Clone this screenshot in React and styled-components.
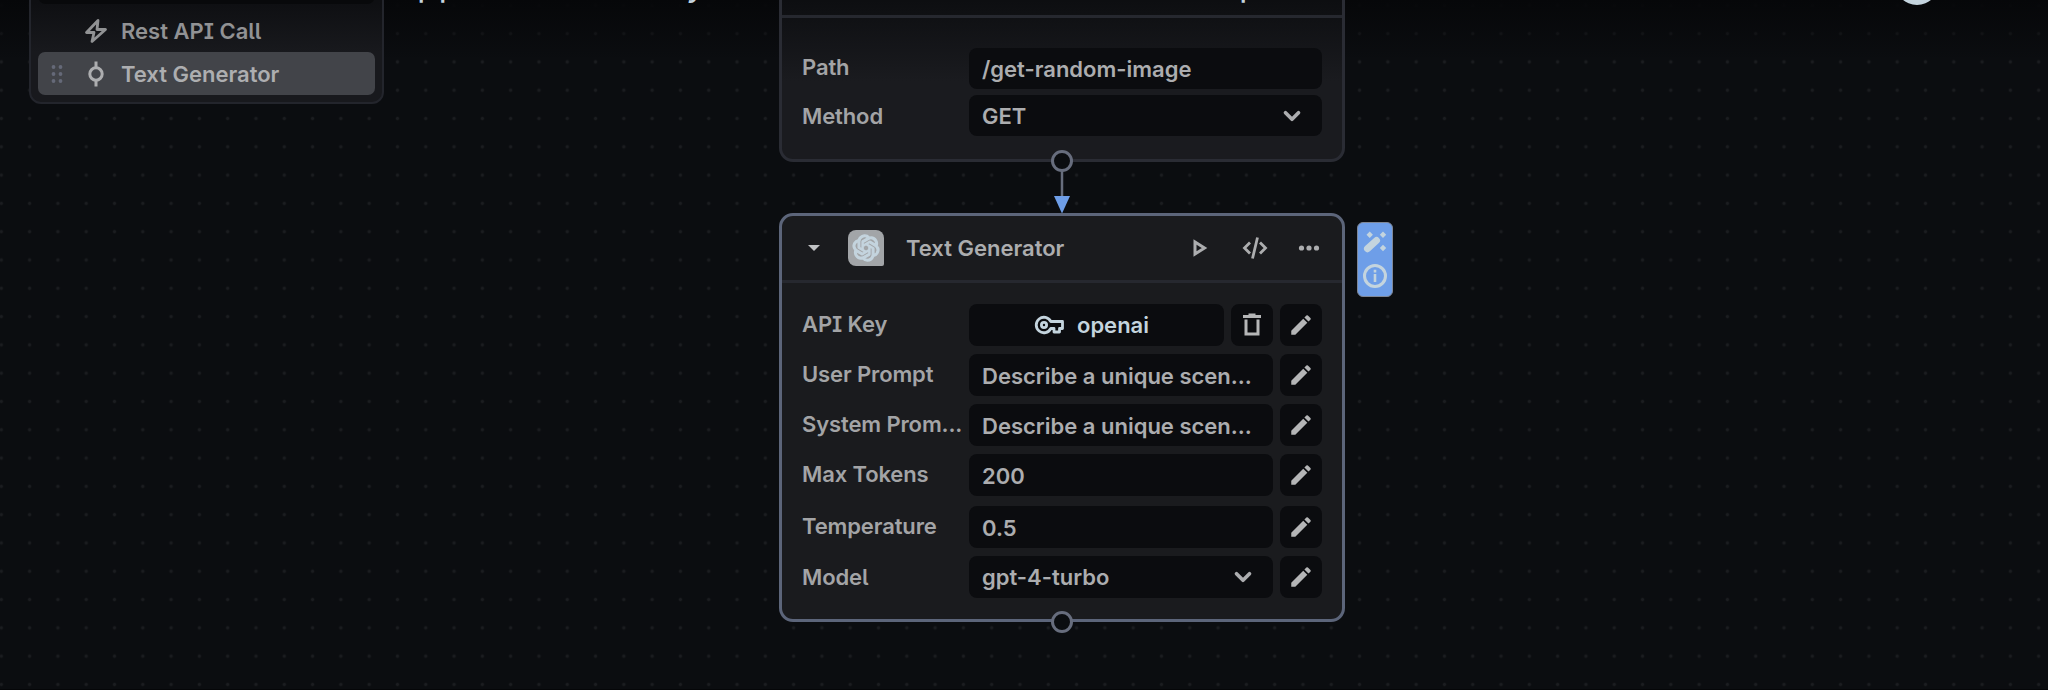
import React from 'react';
import styled, { createGlobalStyle } from 'styled-components';
import { ChevronDown } from 'lucide-react';
import { MdEdit } from 'react-icons/md';
import { SiOpenai } from 'react-icons/si';

const Color = {
  canvas: '#0b0d10',
  panel: '#1a1b1e',
  field: '#0b0c0f',
  line: '#26282f',
  node: '#2a2c34',
  selected: '#5c657a',
  label: '#a3a4a6',
  value: '#acadaf',
  bright: '#c4d4de',
  blue: '#6e9ee8',
};

const GlobalStyle = createGlobalStyle`
  * {
    box-sizing: border-box;
  }
  body {
    margin: 0;
    background: ${Color.canvas};
    font-family: Inter, 'Liberation Sans', sans-serif;
    font-feature-settings: 'cv05', 'cv08';
  }
  svg {
    display: block;
    flex: none;
  }
`;

const Canvas = styled.div`
  position: relative;
  width: 2048px;
  height: 690px;
  overflow: hidden;
  background:
    linear-gradient(#060709, rgba(6, 7, 9, 0) 60px),
    radial-gradient(circle, #1b1d20 0, #1b1d20 1px, transparent 2.3px) -12.85px -8.85px / 28.305px 28.305px,
    ${Color.canvas};
  border-bottom: 1px solid #050608;
`;

const Headline = styled.div`
  position: absolute;
  z-index: 3;
  left: 0;
  top: 0;
  width: 2048px;
  height: 24px;
  overflow: hidden;
  color: ${Color.bright};
  font-size: 35px;
  line-height: 42px;
`;

const Piece = styled.span`
  position: absolute;
  left: ${({ $left }) => $left}px;
  top: -38px;
`;

const Avatar = styled.div`
  position: absolute;
  left: 1895px;
  top: -39px;
  width: 44px;
  height: 44px;
  border-radius: 50%;
  background: ${Color.bright};
`;

const Sidebar = styled.div`
  position: absolute;
  left: 29px;
  top: -60px;
  width: 355px;
  height: 164px;
  padding: 0 7px 7px;
  display: flex;
  flex-direction: column;
  justify-content: flex-end;
  background: linear-gradient(#0e0f12 60px, #18191d 110px);
  border: 2px solid #23252c;
  border-radius: 12px;
`;

const SearchBox = styled.div`
  height: 50px;
  margin-bottom: 5px;
  background: #08090b;
  border-radius: 8px;
`;

const SidebarItem = styled.div`
  display: flex;
  align-items: center;
  height: 43px;
  border-radius: 7px;
  padding-left: 12px;
  color: ${({ $active }) => ($active ? '#adaeb0' : '#919294')};
  background: ${({ $active }) => ($active ? '#424449' : 'transparent')};
  font-size: 22px;
  font-weight: 600;
`;

const Grip = styled.div`
  width: 14px;
  display: flex;
`;

const ItemIcon = styled.div`
  width: 24px;
  display: flex;
  justify-content: center;
  margin: 0 13px 0 20px;
`;

const Node = styled.div`
  position: absolute;
  left: 779px;
  top: ${({ $top }) => $top}px;
  width: 566px;
  height: ${({ $height }) => $height}px;
  background: ${({ $selected }) => ($selected ? Color.panel : 'linear-gradient(#0d0e11 50px, #1a1b1f 130px)')};
  border: 3px solid ${({ $selected }) => ($selected ? Color.selected : Color.node)};
  border-radius: 14px;
`;

const NodeHeader = styled.div`
  display: flex;
  align-items: center;
  height: 67px;
  padding: 0 22px 0 25px;
  border-bottom: 3px solid ${Color.line};
  color: ${Color.value};
`;

const NodeLogo = styled.div`
  display: flex;
  align-items: center;
  justify-content: center;
  width: 36px;
  height: 36px;
  margin: 0 22px 0 27px;
  border-radius: 8px 8px 2px 8px;
  background: #a2a5a8;
  color: ${Color.bright};
`;

const OpenaiMark = styled(SiOpenai)`
  overflow: visible;
  stroke: currentColor;
  stroke-width: 1.2px;
`;

const NodeTitle = styled.div`
  flex: 1;
  font-size: 22px;
  font-weight: 600;
`;

const Actions = styled.div`
  display: flex;
  align-items: center;
  gap: 30px;

  > :first-child {
    margin-right: 4px;
  }
`;

const Rows = styled.div`
  display: flex;
  flex-direction: column;
  padding: ${({ $top }) => $top}px 20px 0 20px;
`;

const Row = styled.div`
  display: flex;
  align-items: flex-start;
  height: ${({ $height }) => $height || 50}px;
`;

const Label = styled.div`
  width: 167px;
  padding-top: ${({ $drop }) => $drop || 6}px;
  color: ${Color.label};
  font-size: 22px;
  line-height: 28px;
  font-weight: 600;
  letter-spacing: -0.12px;
  white-space: nowrap;
`;

const Field = styled.div`
  flex: 1;
  display: flex;
  align-items: center;
  justify-content: ${({ $centered }) => ($centered ? 'center' : 'space-between')};
  gap: 13px;
  height: ${({ $height }) => $height || 42}px;
  padding: ${({ $drop }) => $drop || 0}px ${({ $centered }) => ($centered ? 23 : 17)}px 0 13px;
  border-radius: 8px;
  background: ${Color.field};
  color: ${({ $centered }) => ($centered ? Color.bright : Color.value)};
  font-size: 22px;
  font-weight: 600;
  white-space: nowrap;
`;

const SquareButton = styled.div`
  display: flex;
  align-items: center;
  justify-content: center;
  width: 42px;
  height: 42px;
  margin-left: 7px;
  border-radius: 8px;
  background: ${Color.field};
  color: #b5b6b7;
`;

const Port = styled.div`
  position: absolute;
  z-index: 2;
  left: 1051px;
  top: ${({ $top }) => $top}px;
  width: 22px;
  height: 22px;
  border: 3px solid #676d7d;
  border-radius: 50%;
  background: ${Color.canvas};
`;

const Edge = styled.svg`
  position: absolute;
  left: 1052px;
  top: 170px;
`;

const Toolbar = styled.div`
  position: absolute;
  left: 1357px;
  top: 222px;
  width: 36px;
  height: 75px;
  display: flex;
  flex-direction: column;
  align-items: center;
  justify-content: space-between;
  padding: 7px 0;
  border: 1px solid #7f8796;
  border-radius: 6px;
  background: ${Color.blue};
  color: ${Color.bright};
`;

const BoltIcon = () => (
  <svg width="24" height="26" viewBox="0 0 24 26" fill="none" stroke="currentColor" strokeWidth="2.8" strokeLinejoin="round">
    <path d="M14 2.5 2.5 14.5h7.5L8 23.5l13.5-12h-8.5z" />
  </svg>
);

const CommitIcon = () => (
  <svg width="18" height="26" viewBox="0 0 18 26" fill="none" stroke="currentColor" strokeWidth="3">
    <circle cx="9" cy="13" r="6.2" />
    <path d="M9 0.5v6M9 19.5v6" />
  </svg>
);

const GripIcon = () => (
  <svg width="14" height="20" viewBox="0 0 14 20" fill="#656978">
    {[3, 10, 17].map((y) => (
      <React.Fragment key={y}>
        <circle cx="3.5" cy={y} r="1.9" />
        <circle cx="10.5" cy={y} r="1.9" />
      </React.Fragment>
    ))}
  </svg>
);

const CaretIcon = () => (
  <svg width="14" height="8" viewBox="0 0 14 8" fill="#c0c2c4">
    <path d="M1 1h12L7 7z" />
  </svg>
);

const PlayIcon = () => (
  <svg width="16" height="18" viewBox="0 0 16 18" fill="none" stroke="currentColor" strokeWidth="3">
    <path d="M3 3v12l9.5-6z" />
  </svg>
);

const CodeIcon = () => (
  <svg width="26" height="24" viewBox="0 0 26 24" fill="none" stroke="currentColor" strokeWidth="2.8">
    <path d="M8 6.5 2.5 12 8 17.5M18 6.5l5.5 5.5-5.5 5.5M15.5 1.5l-5 21" />
  </svg>
);

const DotsIcon = () => (
  <svg width="22" height="8" viewBox="0 0 22 8" fill="currentColor">
    <circle cx="3.5" cy="4" r="2.6" />
    <circle cx="11" cy="4" r="2.6" />
    <circle cx="18.5" cy="4" r="2.6" />
  </svg>
);

const KeyIcon = () => (
  <svg width="30" height="20" viewBox="0 0 30 20" fill="none" stroke="currentColor" strokeWidth="2.8" strokeLinejoin="round">
    <path d="M16.8 6.5A7.7 7.7 0 1 0 16.8 13.5h3.2V17h5.5v-3.500h3v-7z" />
    <circle cx="10" cy="10" r="2.6" />
  </svg>
);

const TrashIcon = () => (
  <svg width="20" height="24" viewBox="0 0 20 24" fill="none" stroke="currentColor" strokeWidth="3">
    <path d="M1 3.5h18M6.5 2h7M4 6.5v14.5h12V6.5" />
  </svg>
);

const WandIcon = () => (
  <svg width="25" height="25" viewBox="0 0 25 25" fill="currentColor">
    <path d="M4.5 18.7 13.5 10.5" stroke="currentColor" strokeWidth="7" strokeLinecap="round" />
    <path d="M6.7 1.5 9.9 4.7 6.7 7.9 3.5 4.7zM20 1.5l3.2 3.2L20 7.9l-3.2-3.2zM20 14.8l3.2 3.2-3.2 3.2-3.2-3.2z" />
  </svg>
);

const InfoIcon = () => (
  <svg width="26" height="26" viewBox="0 0 26 26" fill="none" stroke="currentColor" strokeWidth="3">
    <circle cx="13" cy="13" r="10.5" />
    <path d="M13 6.8v2.6M13 11v8" strokeWidth="2.6" />
  </svg>
);

const EditButton = () => (
  <SquareButton>
    <MdEdit size={26} />
  </SquareButton>
);

const Chevron = () => <ChevronDown size={26} strokeWidth={3.4} />;

const fields = [
  { label: 'User Prompt', value: 'Describe a unique scen...', height: 50 },
  { label: 'System Prom...', value: 'Describe a unique scen...', height: 50 },
  { label: 'Max Tokens', value: '200', height: 52 },
  { label: 'Temperature', value: '0.5', height: 50 },
];

const App = () => (
  <>
    <GlobalStyle />
    <Canvas>
      <Sidebar>
        <SearchBox />
        <SidebarItem>
          <Grip />
          <ItemIcon><BoltIcon /></ItemIcon>
          Rest API Call
        </SidebarItem>
        <SidebarItem $active>
          <Grip><GripIcon /></Grip>
          <ItemIcon><CommitIcon /></ItemIcon>
          Text Generator
        </SidebarItem>
      </Sidebar>

      <Node $top={-52} $height={214}>
        <NodeHeader />
        <Rows $top={30}>
          <Row $height={47}>
            <Label $drop={5}>Path</Label>
            <Field $height={41} $drop={1}>/get-random-image</Field>
          </Row>
          <Row>
            <Label $drop={7}>Method</Label>
            <Field $height={41}>
              GET
              <Chevron />
            </Field>
          </Row>
        </Rows>
      </Node>

      <Edge width="20" height="44" viewBox="0 0 20 44">
        <path d="M10 0v28" stroke="#676d7d" strokeWidth="2.5" />
        <path d="M2 26h16L10 43.5z" fill={Color.blue} />
      </Edge>

      <Node $top={213} $height={409} $selected>
        <NodeHeader>
          <CaretIcon />
          <NodeLogo><OpenaiMark size={26} /></NodeLogo>
          <NodeTitle>Text Generator</NodeTitle>
          <Actions>
            <PlayIcon />
            <CodeIcon />
            <DotsIcon />
          </Actions>
        </NodeHeader>
        <Rows $top={21}>
          <Row>
            <Label>API Key</Label>
            <Field $centered>
              <KeyIcon />
              openai
            </Field>
            <SquareButton><TrashIcon /></SquareButton>
            <EditButton />
          </Row>
          {fields.map(({ label, value, height }) => (
            <Row key={label} $height={height}>
              <Label>{label}</Label>
              <Field $drop={2}>{value}</Field>
              <EditButton />
            </Row>
          ))}
          <Row>
            <Label $drop={7}>Model</Label>
            <Field>
              gpt-4-turbo
              <Chevron />
            </Field>
            <EditButton />
          </Row>
        </Rows>
      </Node>

      <Port $top={150} />
      <Port $top={611} />

      <Toolbar>
        <WandIcon />
        <InfoIcon />
      </Toolbar>

      <Headline>
        <Piece $left={417}>pp</Piece>
        <Piece $left={686}>y</Piece>
        <Piece $left={1239}>p</Piece>
      </Headline>
      <Avatar />
    </Canvas>
  </>
);

export default App;
